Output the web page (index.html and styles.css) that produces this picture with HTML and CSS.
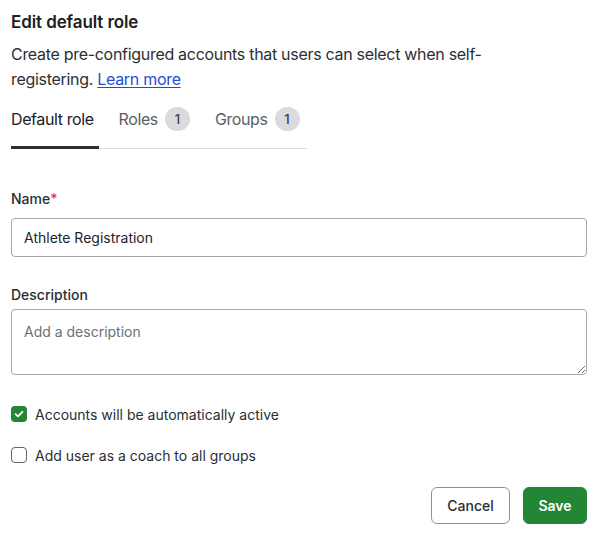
FILE: index.html
```html
<!DOCTYPE html>
<html lang="en">
<head>
<meta charset="utf-8">
<title>Edit default role</title>
<link rel="stylesheet" href="styles.css">
</head>
<body>
<div class="panel">
  <h1 class="title">Edit default role</h1>
  <p class="intro">Create pre-configured accounts that users can select when self-registering. <a href="#" class="link">Learn more</a></p>
  <nav class="tabs">
    <div class="tab active">Default role</div>
    <div class="tab">Roles <span class="badge">1</span></div>
    <div class="tab">Groups <span class="badge">1</span></div>
  </nav>
  <form class="form">
    <div class="field">
      <label class="label" for="name">Name<span class="req">*</span></label>
      <input id="name" class="input" type="text" value="Athlete Registration">
    </div>
    <div class="field field-desc">
      <label class="label" for="desc">Description</label>
      <textarea id="desc" class="textarea" placeholder="Add a description"></textarea>
    </div>
    <label class="check">
      <span class="box checked"><svg viewBox="0 0 16 16" width="16" height="16"><path d="M4.6 8.2l2.3 2.2 4.5-4.6" fill="none" stroke="#fff" stroke-width="1.8" stroke-linecap="round" stroke-linejoin="round"/></svg></span>
      <span class="check-text">Accounts will be automatically active</span>
    </label>
    <label class="check">
      <span class="box"></span>
      <span class="check-text">Add user as a coach to all groups</span>
    </label>
    <div class="actions">
      <button type="button" class="btn btn-secondary">Cancel</button>
      <button type="button" class="btn btn-primary">Save</button>
    </div>
  </form>
</div>
</body>
</html>
```

FILE: styles.css
```css
* { box-sizing: border-box; }
html, body { margin: 0; padding: 0; background: #fff; }
body {
  font-family: Inter, "Noto Sans", sans-serif;
  color: #1f2328;
  -webkit-font-smoothing: antialiased;
}
.panel {
  padding: 10px 9px 0 11px;
}
.title {
  margin: 0;
  font-size: 17px;
  line-height: 24px;
  font-weight: 600;
  color: #1d2024;
  letter-spacing: -0.1px;
}
.intro {
  margin: 8px 0 0;
  font-size: 16px;
  line-height: 25px;
  color: #2b2f35;
  letter-spacing: -0.3px;
  padding-right: 60px;
}
.link {
  color: #1d4ed8;
  text-decoration: underline;
  text-underline-offset: 2px;
}
.tabs {
  display: flex;
  gap: 20px;
  width: 296px;
  margin-top: 15px;
  border-bottom: 1px solid #d9dbde;
}
.tab {
  display: flex;
  align-items: center;
  gap: 7px;
  height: 42px;
  padding: 0 5px 15px 0;
  font-size: 16px;
  line-height: 24px;
  color: #5a5f66;
  white-space: nowrap;
  letter-spacing: -0.4px;
  border-bottom: 3px solid transparent;
  margin-bottom: -1px;
}
.tab.active {
  color: #1d2024;
  border-bottom-color: #2c3036;
}
.badge {
  display: inline-flex;
  align-items: center;
  justify-content: center;
  width: 25px;
  height: 24px;
  border-radius: 12px;
  background: #d9dbde;
  color: #3b4047;
  font-size: 13px;
  font-weight: 500;
  letter-spacing: 0;
}
.form {
  padding-top: 40px;
}
.field {
  display: flex;
  flex-direction: column;
  gap: 9px;
  margin-bottom: 28px;
}
.field-desc {
  gap: 4px;
  margin-bottom: 29px;
}
.label {
  font-size: 14px;
  line-height: 20px;
  font-weight: 500;
  color: #2a2e34;
}
.req { color: #e0393e; }
.input, .textarea {
  width: 100%;
  font-family: inherit;
  font-size: 14px;
  color: #1f2328;
  border: 1px solid #a3a6ab;
  border-radius: 4px;
  padding: 0 12px;
  background: #fff;
}
.input { height: 39px; }
.textarea {
  height: 66px;
  padding: 12px 12px;
  resize: vertical;
  line-height: 20px;
  display: block;
}
.textarea::placeholder { color: #6b7078; }
.check {
  display: flex;
  align-items: center;
  gap: 8px;
  height: 20px;
  margin-bottom: 21px;
  font-size: 14px;
  color: #2a2e34;
}
.box {
  width: 16px;
  height: 16px;
  border: 1.5px solid #5f646b;
  border-radius: 4px;
  display: inline-flex;
  flex: none;
  background: #fff;
}
.box.checked {
  background: #238636;
  border: none;
}
.actions {
  display: flex;
  justify-content: flex-end;
  gap: 13px;
  padding-top: 1px;
}
.btn {
  height: 37px;
  border-radius: 6px;
  font-family: inherit;
  font-size: 14px;
  font-weight: 500;
  padding: 0;
}
.btn-secondary {
  width: 79px;
  background: #fff;
  border: 1px solid #8e9297;
  color: #2a2e34;
}
.btn-primary {
  width: 64px;
  background: #238636;
  border: 1px solid #238636;
  color: #fff;
  font-weight: 600;
}
```
